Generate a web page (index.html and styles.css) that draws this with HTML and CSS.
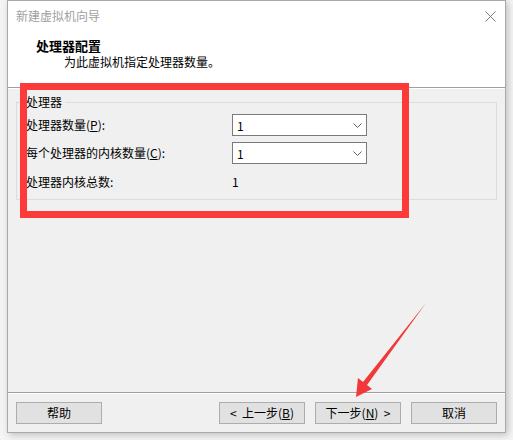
FILE: index.html
```html
<!DOCTYPE html>
<html lang="zh-CN">
<head>
<meta charset="utf-8">
<title>新建虚拟机向导</title>
<link rel="stylesheet" href="styles.css">
</head>
<body>
<div class="window">
  <div class="titlebar">
    <span class="title">新建虚拟机向导</span>
    <svg class="close" width="11" height="11" viewBox="0 0 11 11"><path d="M0.5 0.5 L10.5 10.5 M10.5 0.5 L0.5 10.5" stroke="#7a7a7a" stroke-width="1" fill="none"/></svg>
  </div>
  <div class="header">
    <div class="h-title">处理器配置</div>
    <div class="h-sub">为此虚拟机指定处理器数量。</div>
  </div>
  <div class="content">
    <fieldset class="group">
      <legend>处理器</legend>
      <div class="grid">
        <span class="label">处理器数量(<u>P</u>):</span>
        <div class="combo"><span>1</span><svg class="chev" width="9" height="5" viewBox="0 0 9 5"><path d="M0.5 0.5 L4.5 4.5 L8.5 0.5" stroke="#606060" stroke-width="1" fill="none"/></svg></div>
        <span class="label">每个处理器的内核数量(<u>C</u>):</span>
        <div class="combo"><span>1</span><svg class="chev" width="9" height="5" viewBox="0 0 9 5"><path d="M0.5 0.5 L4.5 4.5 L8.5 0.5" stroke="#606060" stroke-width="1" fill="none"/></svg></div>
        <span class="label total">处理器内核总数:</span>
        <span class="value">1</span>
      </div>
    </fieldset>
  </div>
  <div class="footer">
    <button class="btn">帮助</button>
    <button class="btn back">&lt;&nbsp; 上一步(<u>B</u>)</button>
    <button class="btn">下一步(<u>N</u>) &nbsp;&gt;</button>
    <button class="btn">取消</button>
  </div>
</div>
<div class="highlight"></div>
<svg class="arrow" width="513" height="440" viewBox="0 0 513 440">
  <polygon points="426,303 367,385 372,389 356,397 358,378 363,382" fill="#f23838"/>
</svg>
</body>
</html>
```

FILE: styles.css
```css
html, body {
  margin: 0;
  padding: 0;
}
body {
  width: 513px;
  height: 440px;
  background: #f4f4f4;
  font-family: "Noto Sans CJK SC", "Noto Sans", sans-serif;
  font-size: 12px;
  color: #000;
  position: relative;
  overflow: hidden;
}
.window {
  box-sizing: border-box;
  margin-left: 7px;
  width: 499px;
  height: 433px;
  border: 1px solid #a9a9a9;
  background: #fff;
  box-shadow: 2px 2px 7px rgba(0, 0, 0, 0.22);
  display: flex;
  flex-direction: column;
}
.titlebar {
  height: 29px;
  display: flex;
  align-items: center;
  justify-content: space-between;
  padding: 0 9px 0 8px;
}
.title {
  color: #a0a0a0;
  line-height: 14px;
  margin-top: 1px;
}
.close {
  display: block;
  margin-top: 1px;
}
.header {
  height: 57px;
  border-bottom: 1px solid #a0a0a0;
  box-sizing: content-box;
  padding: 0;
}
.h-title {
  font-weight: bold;
  font-size: 13px;
  line-height: 16px;
  margin-top: 8px;
  padding-left: 28px;
}
.h-sub {
  line-height: 16px;
  padding-left: 56px;
}
.content {
  height: 304px;
  box-sizing: border-box;
  border-top: 1px solid #fff;
  background: #f0f0f0;
  padding: 6px 8px 0 8px;
}
.group {
  margin: 0;
  padding: 5px 9px 7px 9px;
  border: 1px solid #dcdcdc;
}
.group legend {
  padding: 0 3px 0 0;
  line-height: 14px;
}
.grid {
  display: grid;
  grid-template-columns: 206px 135px;
  grid-template-rows: 22px 22px 22px;
  row-gap: 6px;
  align-items: center;
}
.label {
  line-height: 16px;
}
.label.total, .value {
  margin-top: 1px;
}
.combo {
  box-sizing: border-box;
  height: 22px;
  border: 1px solid #7a7a7a;
  background: #fff;
  display: flex;
  align-items: center;
  justify-content: space-between;
  padding: 0 4px 0 4px;
}
.chev {
  display: block;
}
.footer {
  height: 40px;
  box-sizing: border-box;
  border-top: 1px solid #a0a0a0;
  box-shadow: inset 0 1px 0 #fff;
  background: #f0f0f0;
  display: flex;
  align-items: flex-start;
  gap: 10px;
  padding: 9px 8px 0 8px;
}
.btn {
  box-sizing: border-box;
  width: 86px;
  height: 22px;
  border: 1px solid #adadad;
  background: #e1e1e1;
  font-family: inherit;
  font-size: 12px;
  color: #000;
  padding: 0;
  line-height: 18px;
}
.btn.back {
  margin-left: auto;
}
.highlight {
  position: absolute;
  left: 20px;
  top: 83px;
  width: 389px;
  height: 135px;
  box-sizing: border-box;
  border: 7px solid #fc3a3a;
}
.arrow {
  position: absolute;
  left: 0;
  top: 0;
}
```
